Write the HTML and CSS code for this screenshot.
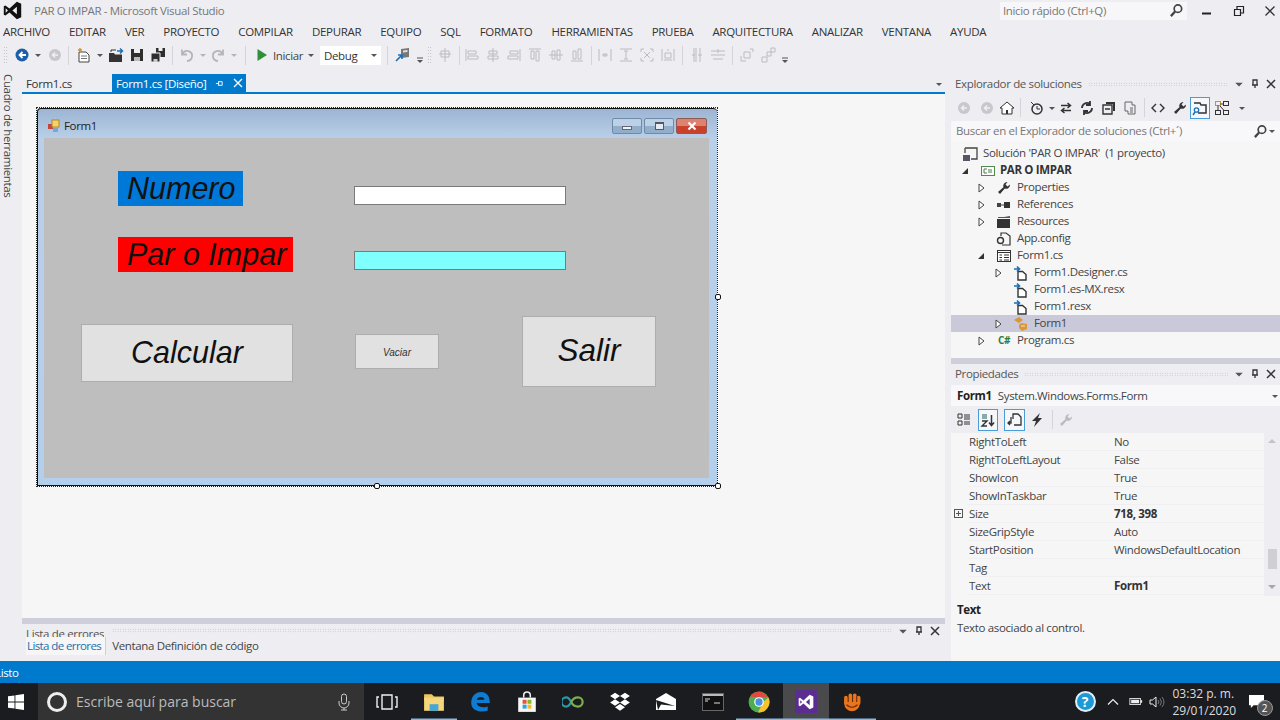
FILE: index.html
```html
<!DOCTYPE html>
<html lang="es">
<head>
    <meta charset="UTF-8">
    <title>PAR O IMPAR - Microsoft Visual Studio</title>
    <link rel="stylesheet" href="styles.css">
</head>
<body>
    <svg class="defs" width="0" height="0">
        <symbol id="vs" viewBox="0 0 24 24"><path fill-rule="evenodd" d="M17.5 1L23 3.6V20.4L17.5 23L8.2 14.4L3 18.4L1 17.4V6.6L3 5.6L8.2 9.6ZM17.5 7.2L11.9 12L17.5 16.8ZM3.4 9.2V14.8L6.2 12Z"/></symbol>
        <symbol id="doc" viewBox="0 0 16 16"><path d="M5 6.5H9.5L13 9.5V15H5Z" fill="#fff" stroke="#333" stroke-width="1.4"/><path d="M1 4H6M4 1.5L6.5 4L4 6.5" fill="none" stroke="#1a6fb0" stroke-width="1.6"/></symbol>
        <symbol id="arrow-open" viewBox="0 0 10 10"><path d="M8 2V8H2Z" fill="#333"/></symbol>
        <symbol id="arrow-closed" viewBox="0 0 10 10"><path d="M3 1L8 5L3 9Z" fill="#fff" stroke="#444"/></symbol>
        <symbol id="drop" viewBox="0 0 8 8"><path d="M1 3H7L4 6Z" fill="#555"/></symbol>
        <symbol id="drop-off" viewBox="0 0 8 8"><path d="M1 3H7L4 6Z" fill="#b5b5b8"/></symbol>
        <symbol id="more" viewBox="0 0 8 12"><path d="M1 6H7" stroke="#555"/><path d="M1 8H7L4 11Z" fill="#555"/></symbol>
        <symbol id="circle-off" viewBox="0 0 16 16"><circle cx="8" cy="8" r="6" fill="#c8c8cc"/><path d="M11 8H6M8 5.5L5.5 8L8 10.5" fill="none" stroke="#f0f0f3" stroke-width="1.5"/></symbol>
        <symbol id="wrench" viewBox="0 0 16 16"><path d="M14 4.5A4 4 0 0 1 8.8 8.6L4 14L2 12L7.4 7.2A4 4 0 0 1 11.5 2L9.5 4.5L11.5 6.5Z" fill="#333"/></symbol>
    </svg>

    <header class="titlebar">
        <svg class="vs-logo"><use href="#vs"/></svg>
        <span class="title-text">PAR O IMPAR - Microsoft Visual Studio</span>
        <div class="quick-launch">
            <span>Inicio rápido (Ctrl+Q)</span>
            <svg class="search-ic" viewBox="0 0 16 16"><circle cx="9.5" cy="6" r="4" fill="none" stroke="#444" stroke-width="1.8"/><path d="M6.5 9L2 14" stroke="#444" stroke-width="2.4"/></svg>
        </div>
        <div class="win-controls">
            <svg viewBox="0 0 12 12"><path d="M1 8.5H10" stroke="#222" stroke-width="2"/></svg>
            <svg viewBox="0 0 12 12"><path d="M1.5 4.5H7.5V10.5H1.5ZM4 4.5V1.5H10.5V8H7.5" fill="none" stroke="#222" stroke-width="1.2"/></svg>
            <svg viewBox="0 0 12 12"><path d="M1.5 1.5L10.5 10.5M10.5 1.5L1.5 10.5" stroke="#333" stroke-width="1.3"/></svg>
        </div>
    </header>

    <nav class="menubar">
        <span>ARCHIVO</span><span>EDITAR</span><span>VER</span><span>PROYECTO</span><span>COMPILAR</span><span>DEPURAR</span><span>EQUIPO</span><span>SQL</span><span>FORMATO</span><span>HERRAMIENTAS</span><span>PRUEBA</span><span>ARQUITECTURA</span><span>ANALIZAR</span><span>VENTANA</span><span>AYUDA</span>
    </nav>

    <div class="toolbar">
        <i class="grip"></i>
        <svg class="ic ml6" viewBox="0 0 16 16"><circle cx="8" cy="8" r="6.5" fill="#1c5fa8"/><path d="M12 8H6M8.5 5L5.5 8L8.5 11" fill="none" stroke="#fff" stroke-width="1.8"/></svg>
        <svg class="dd"><use href="#drop"/></svg>
        <svg class="ic ml2"><use href="#circle-off"/></svg>
        <i class="sep sep-first"></i>
        <svg class="ic" viewBox="0 0 16 16"><path d="M3 5H10L13 8V15H3Z" fill="#fff" stroke="#444"/><path d="M2 3H6M4 1V5" stroke="#c9942f" stroke-width="1.4"/><path d="M5 9H11M5 11.5H11" stroke="#777"/></svg>
        <svg class="dd"><use href="#drop"/></svg>
        <svg class="ic ml1" viewBox="0 0 16 16"><path d="M1 6H6L7 7.5H14V15H1Z" fill="#333"/><path d="M3 5V3H8" fill="none" stroke="#333"/><path d="M9 4H14M12 1.5L14.5 4L12 6.5" fill="none" stroke="#1c6fb5" stroke-width="1.5"/></svg>
        <svg class="ic ml5" viewBox="0 0 16 16"><path d="M2 2H14V14H2Z" fill="#2e2e2e"/><path d="M5 2H11V6H5Z" fill="#eee"/><path d="M5 10H11V14H5Z" fill="#bbb"/></svg>
        <svg class="ic ml5" viewBox="0 0 16 16"><path d="M6 1H15V10H6Z" fill="#2e2e2e"/><path d="M8.5 1H12.5V4H8.5Z" fill="#eee"/><path d="M1 6H10V15H1Z" fill="#2e2e2e" stroke="#eeeef2"/><path d="M3.5 12H7.5V15H3.5Z" fill="#ccc"/></svg>
        <i class="sep"></i>
        <svg class="ic" viewBox="0 0 16 16"><path d="M3 2.5V7.5H8M3.5 7A5 5 0 1 1 8 14" fill="none" stroke="#b5b5b8" stroke-width="1.8"/></svg>
        <svg class="dd"><use href="#drop-off"/></svg>
        <svg class="ic" viewBox="0 0 16 16"><path d="M13 2.5V7.5H8M12.5 7A5 5 0 1 0 8 14" fill="none" stroke="#b5b5b8" stroke-width="1.8"/></svg>
        <svg class="dd"><use href="#drop-off"/></svg>
        <i class="sep sep-play"></i>
        <svg class="play" viewBox="0 0 12 14"><path d="M1.5 1L11 7L1.5 13Z" fill="#2f8f3a"/></svg>
        <span class="start-label">Iniciar</span>
        <svg class="dd"><use href="#drop"/></svg>
        <div class="combo">Debug<svg class="combo-dd"><use href="#drop"/></svg></div>
        <i class="sep sep-wide"></i>
        <svg class="ic" viewBox="0 0 16 16"><path d="M6 2L14 1V10L6 11Z" fill="#777"/><path d="M8 3.5L12.5 3V5L8 5.5Z" fill="#ddd"/><path d="M1 14L7 8M3 8L7 8L7 12" fill="none" stroke="#1c6fb5" stroke-width="1.6"/></svg>
        <svg class="more-ic"><use href="#more"/></svg>
        <i class="grip"></i>
        <div class="off-tools">
            <svg class="ic ml5" viewBox="0 0 16 16"><path d="M8 1V15M2 7H14M4 4H12V10H4Z"/></svg>
            <i class="sep sep-off"></i>
            <svg class="ic ml4" viewBox="0 0 16 16"><path d="M2 2V14M4 4H12V7H4ZM4 9H14V12H4Z"/></svg>
            <svg class="ic ml5" viewBox="0 0 16 16"><path d="M8 1V15M4 4H12V7H4ZM3 9H13V12H3Z"/></svg>
            <svg class="ic ml5" viewBox="0 0 16 16"><path d="M14 2V14M4 4H12V7H4ZM2 9H12V12H2Z"/></svg>
            <svg class="ic ml5" viewBox="0 0 16 16"><path d="M2 2H14M4 4V12H7V4ZM9 4V14H12V4Z"/></svg>
            <svg class="ic ml5" viewBox="0 0 16 16"><path d="M1 8H15M4 4V12H7V4ZM9 3V13H12V3Z"/></svg>
            <svg class="ic ml5" viewBox="0 0 16 16"><path d="M2 14H14M4 4V12H7V4ZM9 2V12H12V2Z"/></svg>
            <i class="sep sep-off"></i>
            <svg class="ic ml5" viewBox="0 0 16 16"><path d="M2 2V14M14 2V14M5 8H11M7 6V10M9 6V10"/></svg>
            <svg class="ic ml5" viewBox="0 0 16 16"><path d="M2 2H14M2 14H14M8 4V12M6 4H10M6 12H10"/></svg>
            <svg class="ic ml5" viewBox="0 0 16 16"><path d="M2 5V2H5M11 2H14V5M14 11V14H11M5 14H2V11M5 5L11 11M11 5L5 11"/></svg>
            <svg class="ic ml5" viewBox="0 0 16 16"><path d="M2 2V14M14 2V14M4 13H12M5 6H11V11H5ZM7 3H9"/></svg>
            <i class="sep sep-off"></i>
            <svg class="ic ml6" viewBox="0 0 16 16"><path d="M5 1V15M7 1V15M11 1V15M3 8H6M9 8H13"/></svg>
            <svg class="ic ml5" viewBox="0 0 16 16"><path d="M1 8H15M1 4H15M3 12H13M8 2V6"/></svg>
            <i class="sep sep-off"></i>
            <svg class="ic ml6" viewBox="0 0 16 16"><path d="M5 5H11V11H5ZM2 9V14H7M11 2H14V5"/></svg>
            <svg class="ic ml5" viewBox="0 0 16 16"><path d="M2 10H7V15H2ZM7 5H11V9H7ZM11 1H15V5H11Z"/></svg>
        </div>
        <svg class="more-ic"><use href="#more"/></svg>
    </div>

    <div class="workspace">
        <aside class="toolbox-strip"><span>Cuadro de herramientas</span></aside>

        <main class="center">
            <div class="tabs">
                <div class="tab">Form1.cs</div>
                <div class="tab tab-active">
                    <span class="tab-name">Form1.cs [Diseño]</span>
                    <svg class="tab-pin" viewBox="0 0 10 10"><path d="M1 5H4M4 2.5V7.5M4 3H8V7H4" fill="none" stroke="#fff"/></svg>
                    <svg class="tab-close" viewBox="0 0 10 10"><path d="M1 1L9 9M9 1L1 9" stroke="#fff" stroke-width="1.3"/></svg>
                </div>
                <svg class="tabs-drop"><use href="#drop"/></svg>
            </div>

            <div class="designer">
                <div class="selection">
                    <div class="form-window">
                        <div class="form-title">
                            <svg class="form-ic" viewBox="0 0 14 14"><rect x="1" y="5" width="5" height="5" fill="#c0453a"/><rect x="5" y="1" width="7" height="7" fill="#f5d36a" stroke="#b0892a"/><rect x="6" y="9" width="5" height="4" fill="#7ea6cf"/></svg>
                            <span>Form1</span>
                            <div class="form-btns">
                                <div class="form-btn"><i class="glyph-min"></i></div>
                                <div class="form-btn"><i class="glyph-max"></i></div>
                                <div class="form-btn form-btn-close"><svg viewBox="0 0 10 10"><path d="M1.5 1.5L8.5 8.5M8.5 1.5L1.5 8.5" stroke="#fff" stroke-width="2.2"/></svg></div>
                            </div>
                        </div>
                        <div class="form-client">
                            <div class="ctl lbl lbl-numero">Numero</div>
                            <div class="ctl lbl lbl-par">Par o Impar</div>
                            <div class="ctl txt txt-num"></div>
                            <div class="ctl txt txt-res"></div>
                            <div class="ctl btn btn-calc">Calcular</div>
                            <div class="ctl btn btn-vaciar">Vaciar</div>
                            <div class="ctl btn btn-salir">Salir</div>
                        </div>
                    </div>
                    <i class="handle handle-r"></i>
                    <i class="handle handle-b"></i>
                    <i class="handle handle-rb"></i>
                </div>
            </div>

            <div class="splitter"></div>

            <div class="errors">
                <div class="errors-head">
                    <div class="errors-title"><span>Lista de errores</span></div>
                    <i class="grip-h"></i>
                    <svg class="head-ic"><use href="#drop"/></svg>
                    <svg class="head-pin" viewBox="0 0 10 10"><path d="M3 1H7V6H3ZM2 6H8M5 6V9" fill="none" stroke="#333" stroke-width="1.3"/></svg>
                    <svg class="head-x" viewBox="0 0 10 10"><path d="M1 1L9 9M9 1L1 9" stroke="#333" stroke-width="1.5"/></svg>
                </div>
                <div class="errors-tabs">
                    <span class="err-tab err-tab-on">Lista de errores</span>
                    <span class="err-tab">Ventana Definición de código</span>
                </div>
            </div>
        </main>

        <aside class="side">
            <section class="explorer">
                <div class="panel-head">
                    <span>Explorador de soluciones</span>
                    <i class="grip-h"></i>
                    <svg class="head-ic"><use href="#drop"/></svg>
                    <svg class="head-pin" viewBox="0 0 10 10"><path d="M3 1H7V6H3ZM2 6H8M5 6V9" fill="none" stroke="#333" stroke-width="1.3"/></svg>
                    <svg class="head-x" viewBox="0 0 10 10"><path d="M1 1L9 9M9 1L1 9" stroke="#333" stroke-width="1.5"/></svg>
                </div>
                <div class="side-tools">
                    <svg class="ic"><use href="#circle-off"/></svg>
                    <svg class="ic st-7"><use href="#circle-off"/></svg>
                    <svg class="ic st-4" viewBox="0 0 16 16"><path d="M8 2L15 8H13V14H3V8H1Z" fill="#fff" stroke="#333"/><path d="M7 10H9V14H7Z" fill="#333"/></svg>
                    <i class="sep st-sep"></i>
                    <svg class="ic st-8" viewBox="0 0 16 16"><circle cx="8" cy="9" r="5" fill="none" stroke="#333" stroke-width="1.5"/><path d="M8 6V9H11M2 2L5 5" fill="none" stroke="#333"/></svg>
                    <svg class="dd-s"><use href="#drop"/></svg>
                    <svg class="ic st-2" viewBox="0 0 16 16"><path d="M3 5.5H12M9.5 3L12.5 5.5L9.5 8M13 10.5H4M6.5 8L3.5 10.5L6.5 13" fill="none" stroke="#333" stroke-width="1.5"/></svg>
                    <svg class="ic st-5" viewBox="0 0 16 16"><path d="M3 8A5 5 0 0 1 11 4M13 8A5 5 0 0 1 5 12M11 1V5H7M5 15V11H9" fill="none" stroke="#333" stroke-width="1.8"/></svg>
                    <svg class="ic st-6" viewBox="0 0 16 16"><path d="M5 2H14V11H12V4H5Z" fill="#333"/><path d="M2 5H11V14H2ZM4 9H9" fill="none" stroke="#333" stroke-width="1.4"/></svg>
                    <svg class="ic st-6" viewBox="0 0 16 16"><path d="M2 2H9V5H12V14H5V11H2ZM7 8H10M7 10H10M7 12H10" fill="none" stroke="#666"/></svg>
                    <i class="sep st-sep"></i>
                    <svg class="ic st-5" viewBox="0 0 16 16"><path d="M6 4L2 8L6 12M10 4L14 8L10 12" fill="none" stroke="#333" stroke-width="1.4"/></svg>
                    <svg class="ic st-6"><use href="#wrench"/></svg>
                    <div class="tool-on"><svg class="ic" viewBox="0 0 16 16"><path d="M2 3H8L9 5H14V13H6" fill="none" stroke="#333" stroke-width="1.5"/><circle cx="4.5" cy="10" r="2.2" fill="none" stroke="#1c6fb5" stroke-width="1.3"/><path d="M3 12L1 15" stroke="#1c6fb5" stroke-width="1.5"/></svg></div>
                    <svg class="ic st-3" viewBox="0 0 16 16"><rect x="1.5" y="1.5" width="5" height="4" fill="none" stroke="#c9942f"/><rect x="9.5" y="1.5" width="5" height="4" fill="none" stroke="#333"/><rect x="1.5" y="10.5" width="5" height="4" fill="none" stroke="#333"/><rect x="9.5" y="10.5" width="5" height="4" fill="none" stroke="#333"/><path d="M4 5.5V10.5M6.5 4H9.5M6 6L10 10.5" stroke="#333"/></svg>
                    <svg class="dd-s st-8"><use href="#drop"/></svg>
                </div>
                <div class="side-search">
                    <span>Buscar en el Explorador de soluciones (Ctrl+´)</span>
                    <svg class="search-ic" viewBox="0 0 16 16"><circle cx="9.5" cy="6" r="4" fill="none" stroke="#444" stroke-width="1.8"/><path d="M6.5 9L2 14" stroke="#444" stroke-width="2.4"/></svg>
                    <svg class="dd-s"><use href="#drop"/></svg>
                </div>
                <div class="tree">
                    <div class="row sol">
                        <svg class="row-ic" viewBox="0 0 16 16"><path d="M3 2H15V13H9M3 2V7" fill="none" stroke="#444" stroke-width="1.3"/><path d="M1 9H8V15H1Z" fill="#556"/></svg>
                        <span>Solución 'PAR O IMPAR'&nbsp; (1 proyecto)</span>
                    </div>
                    <div class="row lv0 strong">
                        <svg class="arrow"><use href="#arrow-open"/></svg>
                        <svg class="row-ic" viewBox="0 0 16 16"><rect x="1.5" y="3.5" width="13" height="9" fill="#fff" stroke="#4f8a4f"/><path d="M4 6H7M4 6V10H7M9 6V10M11 6V10" fill="none" stroke="#4f7a4f"/></svg>
                        <span>PAR O IMPAR</span>
                    </div>
                    <div class="row lv1">
                        <svg class="arrow"><use href="#arrow-closed"/></svg>
                        <svg class="row-ic"><use href="#wrench"/></svg>
                        <span>Properties</span>
                    </div>
                    <div class="row lv1">
                        <svg class="arrow"><use href="#arrow-closed"/></svg>
                        <svg class="row-ic" viewBox="0 0 16 16"><rect x="1" y="6" width="4" height="4" fill="#444"/><rect x="8" y="5" width="6" height="6" fill="#333"/><path d="M5 8H8" stroke="#444"/></svg>
                        <span>References</span>
                    </div>
                    <div class="row lv1">
                        <svg class="arrow"><use href="#arrow-closed"/></svg>
                        <svg class="row-ic" viewBox="0 0 16 16"><path d="M1 5H14V14H1Z" fill="#333"/><path d="M2 3H8L14 2V4H2Z" fill="#555"/></svg>
                        <span>Resources</span>
                    </div>
                    <div class="row lv1">
                        <i class="arrow"></i>
                        <svg class="row-ic" viewBox="0 0 16 16"><path d="M5 5V2H10L14 5V14H6" fill="none" stroke="#333" stroke-width="1.2"/><circle cx="4.5" cy="9.5" r="3" fill="none" stroke="#333" stroke-width="1.4"/></svg>
                        <span>App.config</span>
                    </div>
                    <div class="row lv1">
                        <svg class="arrow"><use href="#arrow-open"/></svg>
                        <svg class="row-ic" viewBox="0 0 16 16"><rect x="1.5" y="2.5" width="13" height="11" fill="#fff" stroke="#333"/><path d="M1.5 4.5H14.5M3.5 7H6M8 7H13M3.5 9.5H6M8 9.5H13M3.5 12H6M8 12H13" stroke="#333"/></svg>
                        <span>Form1.cs</span>
                    </div>
                    <div class="row lv2">
                        <svg class="arrow"><use href="#arrow-closed"/></svg>
                        <svg class="row-ic"><use href="#doc"/></svg>
                        <span>Form1.Designer.cs</span>
                    </div>
                    <div class="row lv2">
                        <i class="arrow"></i>
                        <svg class="row-ic"><use href="#doc"/></svg>
                        <span>Form1.es-MX.resx</span>
                    </div>
                    <div class="row lv2">
                        <i class="arrow"></i>
                        <svg class="row-ic"><use href="#doc"/></svg>
                        <span>Form1.resx</span>
                    </div>
                    <div class="row lv2 row-sel">
                        <svg class="arrow"><use href="#arrow-closed"/></svg>
                        <svg class="row-ic" viewBox="0 0 16 16"><path d="M1 4L6 1L10 4L6 7ZM8 7L14 8V13L9 15L6 12V9Z" fill="#d8973a"/><path d="M8 10H12" stroke="#f3e3c0"/></svg>
                        <span>Form1</span>
                    </div>
                    <div class="row lv1">
                        <svg class="arrow"><use href="#arrow-closed"/></svg>
                        <span class="cs-ic">C#</span>
                        <span>Program.cs</span>
                    </div>
                </div>
            </section>

            <div class="splitter"></div>

            <section class="props">
                <div class="panel-head">
                    <span>Propiedades</span>
                    <i class="grip-h"></i>
                    <svg class="head-ic"><use href="#drop"/></svg>
                    <svg class="head-pin" viewBox="0 0 10 10"><path d="M3 1H7V6H3ZM2 6H8M5 6V9" fill="none" stroke="#333" stroke-width="1.3"/></svg>
                    <svg class="head-x" viewBox="0 0 10 10"><path d="M1 1L9 9M9 1L1 9" stroke="#333" stroke-width="1.5"/></svg>
                </div>
                <div class="object-combo">
                    <b>Form1</b><span>System.Windows.Forms.Form</span>
                    <svg class="dd-s"><use href="#drop"/></svg>
                </div>
                <div class="props-tools">
                    <svg class="ic" viewBox="0 0 16 16"><path d="M2 2H6V6H2ZM2 9H6V13H2ZM8 3H14M8 5H14M8 7H14M8 10H14M8 12H14" fill="none" stroke="#333"/></svg>
                    <div class="tool-on tool-alpha"><svg class="ic" viewBox="0 0 16 16"><path d="M2 2H7V7H2Z" fill="#8aa"/><path d="M2 9H7L2 14H7" fill="none" stroke="#333" stroke-width="1.4"/><path d="M11.5 3V13M9 10.5L11.5 13.5L14 10.5" fill="none" stroke="#333" stroke-width="1.5"/></svg></div>
                    <div class="tool-on tool-page"><svg class="ic" viewBox="0 0 16 16"><path d="M6 7V2H11L14 5V13H7" fill="none" stroke="#333" stroke-width="1.3"/><path d="M4 5V11H1M3 9L1 11L3 13" fill="none" stroke="#333" stroke-width="1.3"/></svg></div>
                    <svg class="ic tool-bolt" viewBox="0 0 16 16"><path d="M11 1L3 9H7L5 15L13 6H9Z" fill="#333"/></svg>
                    <i class="sep prop-sep"></i>
                    <svg class="ic tool-key" viewBox="0 0 16 16"><path d="M14 4.5A4 4 0 0 1 8.8 8.6L4 14L2 12L7.4 7.2A4 4 0 0 1 11.5 2L9.5 4.5L11.5 6.5Z" fill="#bbb"/></svg>
                </div>
                <div class="grid-wrap">
                    <div class="prop-grid">
                        <div class="p-row"><span class="p-name">RightToLeft</span><span class="p-val">No</span></div>
                        <div class="p-row"><span class="p-name">RightToLeftLayout</span><span class="p-val">False</span></div>
                        <div class="p-row"><span class="p-name">ShowIcon</span><span class="p-val">True</span></div>
                        <div class="p-row"><span class="p-name">ShowInTaskbar</span><span class="p-val">True</span></div>
                        <div class="p-row"><i class="plus"></i><span class="p-name">Size</span><span class="p-val strong">718, 398</span></div>
                        <div class="p-row"><span class="p-name">SizeGripStyle</span><span class="p-val">Auto</span></div>
                        <div class="p-row"><span class="p-name">StartPosition</span><span class="p-val">WindowsDefaultLocation</span></div>
                        <div class="p-row"><span class="p-name">Tag</span><span class="p-val"></span></div>
                        <div class="p-row"><span class="p-name">Text</span><span class="p-val strong">Form1</span></div>
                    </div>
                    <div class="scroll">
                        <svg viewBox="0 0 10 6"><path d="M1 5H9L5 1Z" fill="#c4c4c8"/></svg>
                        <i class="thumb"></i>
                        <svg viewBox="0 0 10 6"><path d="M1 1H9L5 5Z" fill="#a8a8ac"/></svg>
                    </div>
                </div>
                <div class="prop-desc">
                    <b>Text</b>
                    <span>Texto asociado al control.</span>
                </div>
            </section>
        </aside>
    </div>

    <footer class="statusbar"><span>Listo</span></footer>

    <div class="taskbar">
        <div class="start">
            <svg viewBox="0 0 16 16"><path d="M0 2.3L6.5 1.4V7.5H0ZM7.4 1.3L16 0V7.5H7.4ZM0 8.5H6.5V14.6L0 13.7ZM7.4 8.5H16V16L7.4 14.7Z" fill="#fff"/></svg>
        </div>
        <div class="cortana">
            <i class="ring"></i>
            <span>Escribe aquí para buscar</span>
            <svg class="mic" viewBox="0 0 12 18"><rect x="3.5" y="1" width="5" height="10" rx="2.5" fill="none" stroke="#ccc"/><path d="M1 8V10A5 5 0 0 0 11 10V8M6 15V17M3 17H9" fill="none" stroke="#ccc"/></svg>
        </div>
        <div class="task-apps">
            <div class="app"><svg viewBox="0 0 22 22"><path d="M6 4H16V18H6ZM3 6H1V16H3M19 6H21V16H19" fill="none" stroke="#eee" stroke-width="1.4"/></svg></div>
            <div class="app app-open"><svg viewBox="0 0 20 20"><path d="M1 3H8L10 5H19V9H1Z" fill="#f1c75c"/><path d="M1 6H19V18H1Z" fill="#f5d67a"/><path d="M6 12H14V18H6Z" fill="#49a5d6"/></svg></div>
            <div class="app"><svg viewBox="0 0 20 20"><path d="M2 11C2 5 6 1 11 1C16 1 19 5 19 11H7C7.5 14 11 16 17 14V18C10 20 2 18 2 11ZM7 8H14C14 4.5 8 4.5 7 8Z" fill="#0f7bd1"/></svg></div>
            <div class="app"><svg viewBox="0 0 20 20"><path d="M2 6H18V19H2Z" fill="#f7f7f7"/><path d="M7 6V4A3 3 0 0 1 13 4V6" fill="none" stroke="#eee" stroke-width="1.4"/><rect x="6" y="8" width="3.6" height="3.6" fill="#e8552d"/><rect x="10.4" y="8" width="3.6" height="3.6" fill="#7fba2a"/><rect x="6" y="12.4" width="3.6" height="3.6" fill="#2aa3e8"/><rect x="10.4" y="12.4" width="3.6" height="3.6" fill="#fbb820"/></svg></div>
            <div class="app"><svg viewBox="0 0 24 14"><path d="M10 7C8 3 6 2 4.5 2A5 5 0 0 0 4.5 12C6 12 8 11 10 7" fill="none" stroke="#2b9ba8" stroke-width="2.4"/><path d="M10 7C12 3 14 2 17.5 2A5 5 0 0 1 17.5 12C14 12 12 11 10 7" fill="none" stroke="#7db04a" stroke-width="2.4"/></svg></div>
            <div class="app"><svg viewBox="0 0 20 20"><path d="M5.5 1.5L10 4.5L5.5 7.5L1 4.5ZM14.5 1.5L19 4.5L14.5 7.5L10 4.5ZM5.5 7.5L10 10.5L5.5 13.5L1 10.5ZM14.5 7.5L19 10.5L14.5 13.5L10 10.5ZM5.5 14.8L10 11.8L14.5 14.8L10 18Z" fill="#fff"/></svg></div>
            <div class="app"><svg viewBox="0 0 22 20"><path d="M1 7L11 1L21 7V18H1Z" fill="#fff"/><path d="M1 8L20 14L6 12.5L3 18Z" fill="#1a1c20"/></svg></div>
            <div class="app"><svg viewBox="0 0 22 20"><rect x="0.5" y="1.5" width="21" height="17" fill="#111" stroke="#666"/><rect x="1" y="2" width="20" height="2" fill="#bbb"/><path d="M3 7H8M3 9H6M12 11H18" stroke="#ddd"/></svg></div>
            <div class="app app-open"><svg viewBox="0 0 20 20"><circle cx="10" cy="10" r="9.5" fill="#4cae4f"/><path d="M1.8 5.2A9.5 9.500 0 0 1 18.2 5.5H8Z" fill="#dd4b3e"/><path d="M18.6 6A9.5 9.5 0 0 1 9 19.5L14 10Z" fill="#fbc02d"/><circle cx="10" cy="10" r="4.4" fill="#fff"/><circle cx="10" cy="10" r="3.3" fill="#4a8fe0"/></svg></div>
            <div class="app app-open app-active"><div class="vs-tile"><svg><use href="#vs"/></svg></div></div>
            <div class="app app-open"><svg viewBox="0 0 20 20"><circle cx="10" cy="11.5" r="7" fill="#e8761e"/><path d="M4.5 6V11M8.500 4V10M12.500 4V10M16 6V11" stroke="#e8761e" stroke-width="3.4" stroke-linecap="round"/><path d="M6.500 5V10M10.500 4V10M14.300 5V10" stroke="#6b2a08"/><path d="M5 12.500C8 15.500 12 15.500 15 12.500" fill="none" stroke="#7c2e08" stroke-width="1.3"/></svg></div>
        </div>
        <div class="tray">
            <div class="help-ic">?</div>
            <svg class="tray-ic tray-up" viewBox="0 0 14 10"><path d="M2 8L7 3L12 8" fill="none" stroke="#eee" stroke-width="1.2"/></svg>
            <svg class="tray-ic" viewBox="0 0 16 10"><rect x="1" y="1.5" width="12" height="7" fill="none" stroke="#eee"/><rect x="2.5" y="3" width="9" height="4" fill="#eee"/><rect x="13.5" y="3.5" width="1.5" height="3" fill="#eee"/></svg>
            <svg class="tray-vol" viewBox="0 0 16 14"><path d="M1 5H3.5L7 2V12L3.5 9H1Z" fill="none" stroke="#eee"/><path d="M9 5A3 3 0 0 1 9 9M11 3.5A5.5 5.5 0 0 1 11 10.5M13 2A8 8 0 0 1 13 12" fill="none" stroke="#777"/></svg>
            <div class="clock"><span>03:32 p. m.</span><span>29/01/2020</span></div>
            <div class="notif">
                <svg viewBox="0 0 18 16"><path d="M1 1H17V12H6L3 15V12H1Z" fill="#fff"/></svg>
                <span class="notif-badge">2</span>
            </div>
        </div>
    </div>
</body>
</html>
```

FILE: styles.css
```css
* {
    box-sizing: border-box;
}
html, body {
    margin: 0;
    height: 720px;
    overflow: hidden;
}
body {
    width: 1280px;
    display: flex;
    flex-direction: column;
    background: #eeeef2;
    color: #444;
    font-family: "Open Sans", sans-serif;
    font-size: 11.5px;
    letter-spacing: -0.35px;
    white-space: nowrap;
}
i {
    display: block;
}
svg {
    display: block;
    flex: none;
}
.defs {
    position: absolute;
}

/* title + menu */
.titlebar {
    height: 21px;
    flex: none;
    display: flex;
    align-items: center;
}
.vs-logo {
    width: 19px;
    height: 19px;
    margin-left: 3px;
    fill: #111;
}
.title-text {
    margin-left: 12px;
    color: #777;
}
.quick-launch {
    margin-left: auto;
    width: 187px;
    height: 18px;
    background: #f7f7f9;
    display: flex;
    align-items: center;
    justify-content: space-between;
    padding: 0 3px;
    color: #777;
}
.search-ic {
    width: 15px;
    height: 15px;
}
.win-controls {
    width: 93px;
    display: flex;
    justify-content: space-between;
    padding: 0 4px 0 14px;
}
.win-controls svg {
    width: 12px;
    height: 12px;
}
.menubar {
    height: 22px;
    flex: none;
    display: flex;
    align-items: center;
    gap: 19px;
    padding: 0 0 2px 3px;
    color: #333;
    letter-spacing: -0.3px;
}
.toolbar {
    height: 24px;
    flex: none;
    display: flex;
    align-items: center;
    padding-left: 3px;
}
.grip {
    width: 5px;
    height: 18px;
    background-image: radial-gradient(#b8b8c0 0.7px, transparent 0.8px);
    background-size: 2.5px 3px;
}
.ic {
    width: 16px;
    height: 16px;
}
.ml1 { margin-left: 1px; }
.ml2 { margin-left: 2px; }
.ml4 { margin-left: 4px; }
.ml5 { margin-left: 5px; }
.ml6 { margin-left: 6px; }
.dd {
    width: 8px;
    height: 8px;
    margin: 0 3px 0 4px;
}
.dd-s {
    width: 8px;
    height: 8px;
}
.sep {
    width: 1px;
    height: 19px;
    background: #d4d4d9;
    margin: 0 6px;
}
.sep-first {
    margin: 0 7px 0 5px;
}
.sep-play {
    margin: 0 10px 0 4px;
}
.play {
    width: 12px;
    height: 14px;
}
.start-label {
    width: 30px;
    margin-left: 5px;
}
.combo {
    width: 61px;
    height: 19px;
    margin-left: 2px;
    background: #fff;
    display: flex;
    align-items: center;
    justify-content: space-between;
    padding: 0 3px 0 4px;
    color: #333;
}
.combo-dd {
    width: 8px;
    height: 8px;
}
.sep-wide {
    margin: 0 7px 0 6px;
}
.more-ic {
    width: 8px;
    height: 12px;
    margin: 5px 3px 0 5px;
}
.off-tools {
    display: flex;
    align-items: center;
}
.off-tools path {
    fill: none;
    stroke: #bcbcc0;
    stroke-width: 1;
}
.sep-off {
    margin: 0 0 0 6px;
}

/* main area */
.workspace {
    flex: 1;
    min-height: 0;
    display: flex;
    padding-top: 7px;
}
.toolbox-strip {
    width: 22px;
    flex: none;
    padding-left: 2px;
}
.toolbox-strip span {
    writing-mode: vertical-rl;
    display: block;
    color: #444;
    line-height: 13px;
}
.center {
    width: 923px;
    flex: none;
    display: flex;
    flex-direction: column;
}
.tabs {
    height: 20px;
    flex: none;
    display: flex;
    align-items: stretch;
    border-bottom: 2px solid #007acc;
}
.tab {
    width: 90px;
    padding-left: 4px;
    line-height: 19px;
    color: #333;
}
.tab-active {
    width: 134px;
    background: #007acc;
    color: #fff;
    display: flex;
    align-items: center;
}
.tab-name {
    width: 90px;
}
.tab-pin {
    width: 9px;
    height: 9px;
    margin-left: 9px;
}
.tab-close {
    width: 10px;
    height: 10px;
    margin-left: 9px;
}
.tabs-drop {
    width: 8px;
    height: 8px;
    margin: 6px 2px 0 auto;
}
.designer {
    flex: 1;
    min-height: 0;
    background: #f6f6f7;
    padding: 13px 0 0 14px;
}
.selection {
    position: relative;
    width: 682px;
    height: 380px;
    border: 1px dotted #222;
}
.form-window {
    height: 100%;
    border: 1px solid #111;
    border-width: 1px 0 1px 1px;
    border-radius: 4px 4px 0 0;
    background: linear-gradient(#9db5d3, #bad0e9 30px, #b4cfec);
    display: flex;
    flex-direction: column;
    padding: 0 8px 7px 6px;
}
.form-title {
    height: 29px;
    padding: 4px 0 0 3px;
    flex: none;
    display: flex;
    align-items: center;
    color: #222;
}
.form-ic {
    width: 14px;
    height: 14px;
    margin-right: 3px;
}
.form-btns {
    margin-left: auto;
    display: flex;
    gap: 2px;
    margin-right: 2px;
}
.form-btn {
    width: 30px;
    height: 16px;
    border: 1px solid #6f8bab;
    border-radius: 2px;
    background: linear-gradient(#bcd0e6 50%, #93aecb 50%);
    display: flex;
    align-items: center;
    justify-content: center;
}
.form-btn-close {
    width: 31px;
    border-color: #8f5a55;
    background: linear-gradient(#dd8270 50%, #c9402b 50%);
}
.form-btn-close svg {
    width: 10px;
    height: 10px;
}
.glyph-min {
    width: 10px;
    height: 4px;
    margin-top: 4px;
    background: #eef3f8;
    border: 1px solid #667;
}
.glyph-max {
    width: 9px;
    height: 8px;
    background: #e4ebf3;
    border: 1px solid #556;
    box-shadow: inset 0 1px 0 #556;
}
.form-client {
    position: relative;
    flex: 1;
    background: #bebebe;
}
/* controls sit where the designer put them, offsets are from the form client area */
.ctl {
    position: absolute;
    font-family: "Liberation Sans", sans-serif;
    font-style: italic;
    letter-spacing: 0;
    color: #111;
}
.lbl {
    left: 74px;
    height: 35px;
    line-height: 35px;
    padding-left: 9px;
    font-size: 30.5px;
}
.lbl-numero {
    top: 33px;
    width: 125px;
    background: #0078d7;
}
.lbl-par {
    top: 99px;
    width: 175px;
    background: #ff0000;
}
.txt {
    left: 310px;
    width: 212px;
    height: 19px;
    border: 1px solid #7a7a7a;
    background: #fff;
}
.txt-num {
    top: 48px;
}
.txt-res {
    top: 113px;
    background: #80ffff;
}
.btn {
    display: flex;
    align-items: center;
    justify-content: center;
    background: #e1e1e1;
    border: 1px solid #adadad;
}
.btn-calc {
    left: 37px;
    top: 186px;
    width: 212px;
    height: 58px;
    padding-bottom: 2px;
    font-size: 30.5px;
}
.btn-vaciar {
    left: 311px;
    top: 196px;
    width: 84px;
    height: 35px;
    padding-top: 2px;
    font-size: 10px;
    color: #333;
}
.btn-salir {
    left: 478px;
    top: 178px;
    width: 134px;
    height: 71px;
    padding-bottom: 2px;
    font-size: 31.5px;
}
.handle {
    position: absolute;
    width: 6px;
    height: 6px;
    background: #fff;
    border: 1px solid #111;
    border-radius: 2px;
}
.handle-r {
    right: -4px;
    top: 186px;
}
.handle-b {
    left: 337px;
    bottom: -3px;
}
.handle-rb {
    right: -4px;
    bottom: -3px;
}
.splitter {
    height: 6px;
    flex: none;
    background: #cfcfdc;
}
.errors {
    height: 37px;
    flex: none;
}
.errors-head {
    height: 13px;
    display: flex;
    align-items: center;
    padding: 0 5px 0 4px;
}
.errors-title {
    height: 11px;
    margin-top: 2px;
    overflow: hidden;
    line-height: 16px;
    color: #555;
    flex: none;
}
.grip-h {
    flex: 1;
    height: 5px;
    margin: 0 6px 0 8px;
    background-image: radial-gradient(#bcbcc4 0.7px, transparent 0.8px);
    background-size: 2.5px 2.5px;
}
.head-ic {
    width: 10px;
    height: 10px;
}
.head-pin {
    width: 10px;
    height: 10px;
    margin-left: 6px;
}
.head-x {
    width: 10px;
    height: 10px;
    margin-left: 6px;
}
.errors-tabs {
    display: flex;
    height: 20px;
    align-items: center;
    padding: 0 0 2px 4px;
}
.err-tab {
    padding: 0 4px 0 1px;
    color: #444;
    line-height: 18px;
}
.err-tab-on {
    color: #1e6fa8;
    border-right: 1px solid #cfcfd6;
    margin-right: 5px;
    background: #f6f6f7;
    letter-spacing: -0.6px;
}

/* right side panels */
.side {
    flex: 1;
    margin-left: 6px;
    display: flex;
    flex-direction: column;
    min-width: 0;
}
.explorer {
    height: 284px;
    flex: none;
    display: flex;
    flex-direction: column;
}
.panel-head {
    height: 20px;
    flex: none;
    display: flex;
    align-items: center;
    padding: 0 4px;
    color: #555;
}
.panel-head > span {
    padding-bottom: 2px;
}
.panel-head .grip-h {
    margin: 0 6px;
}
.side-tools {
    height: 27px;
    flex: none;
    display: flex;
    align-items: center;
    padding-left: 5px;
}
.st-2 { margin-left: 2px; }
.st-3 { margin-left: 4px; }
.st-4 { margin-left: 4px; }
.st-5 { margin-left: 5px; }
.st-6 { margin-left: 6px; }
.st-7 { margin-left: 7px; }
.st-8 { margin-left: 8px; }
.side-tools .dd-s {
    margin-left: 3px;
}
.side-tools .dd-s.st-8 {
    margin-left: 8px;
}
.st-sep {
    margin: 0 0 0 5px;
}
.tool-on {
    width: 20px;
    height: 22px;
    margin-left: 2px;
    border: 1px solid #4b9cd6;
    background: #f5f7fa;
    display: flex;
    align-items: center;
    justify-content: center;
}
.side-search {
    height: 20px;
    flex: none;
    background: #f8f8fa;
    display: flex;
    align-items: center;
    padding: 0 4px 0 5px;
    color: #777;
}
.side-search span {
    flex: 1;
    padding-bottom: 2px;
}
.tree {
    flex: 1;
    padding-top: 4px;
    background: #f6f6f7;
}
.row {
    height: 17px;
    display: flex;
    align-items: center;
    color: #444;
}
.row > span {
    padding-bottom: 2px;
}
.sol {
    padding-left: 11px;
}
.row-ic {
    width: 16px;
    height: 16px;
}
.lv0 { padding-left: 9px; }
.lv1 { padding-left: 25px; }
.lv2 { padding-left: 42px; }
.arrow {
    width: 10px;
    height: 10px;
    margin-right: 10px;
}
.row .row-ic + span, .cs-ic + span {
    margin-left: 5px;
}
.lv0 .row-ic + span {
    margin-left: 4px;
}
.strong {
    font-weight: 700;
    color: #333;
}
.row-sel {
    background: #c9c9d9;
}
.row > .cs-ic {
    width: 16px;
    color: #2f7d3f;
    font-weight: 700;
    font-size: 10px;
    text-align: center;
}
.props {
    flex: 1;
    min-height: 0;
    display: flex;
    flex-direction: column;
}
.object-combo {
    height: 21px;
    margin-top: 1px;
    flex: none;
    background: #f8f8fa;
    display: flex;
    align-items: center;
    padding: 0 1px 0 6px;
}
.object-combo b {
    color: #222;
    margin-right: 6px;
}
.object-combo .dd-s {
    margin-left: auto;
}
.props-tools {
    height: 27px;
    flex: none;
    display: flex;
    align-items: center;
    padding-left: 5px;
}
.tool-alpha {
    margin-left: 6px;
}
.tool-page {
    width: 21px;
    margin-left: 6px;
}
.tool-bolt {
    margin-left: 4px;
}
.prop-sep {
    margin: 0 0 0 7px;
}
.tool-key {
    margin-left: 5px;
}
.grid-wrap {
    height: 163px;
    flex: none;
    display: flex;
}
.prop-grid {
    flex: 1;
    background: #f6f6f7;
    padding-left: 16px;
}
.p-row {
    position: relative;
    height: 18px;
    display: flex;
    align-items: center;
    border-bottom: 1px solid #f0f0f2;
    color: #444;
}
.p-name {
    width: 145px;
    padding-left: 2px;
}
.p-val {
    padding-left: 2px;
}
.plus {
    position: absolute;
    left: -13px;
    top: 4px;
    width: 9px;
    height: 9px;
    border: 1px solid #555;
    background: linear-gradient(#555, #555) center / 5px 1px no-repeat, linear-gradient(#555, #555) center / 1px 5px no-repeat;
}
.scroll {
    width: 16px;
    flex: none;
    display: flex;
    flex-direction: column;
    align-items: center;
    padding: 5px 0 6px;
    background: #eeeef2;
}
.scroll svg {
    width: 10px;
    height: 6px;
}
.thumb {
    width: 9px;
    height: 20px;
    margin: 105px 0 auto;
    background: #d0d0d4;
}
.prop-desc {
    flex: 1;
    background: #f6f6f7;
    padding: 6px 6px;
    display: flex;
    flex-direction: column;
    gap: 3px;
    line-height: 15px;
}
.prop-desc b {
    color: #222;
}

/* bottom bars */
.statusbar {
    height: 22px;
    flex: none;
    background: #007acc;
    color: #fff;
    line-height: 23px;
    overflow: hidden;
}
.statusbar span {
    display: block;
    margin-left: -5px;
}
.taskbar {
    height: 37px;
    flex: none;
    background: #1a1c20;
    display: flex;
    align-items: stretch;
    color: #eee;
}
.start {
    width: 38px;
    display: flex;
    align-items: center;
    padding-left: 8px;
}
.start svg {
    width: 16px;
    height: 16px;
}
.cortana {
    width: 326px;
    background: #333;
    display: flex;
    align-items: center;
    padding-left: 9px;
    color: #bbb;
    font-size: 14px;
    letter-spacing: 0;
}
.ring {
    width: 20px;
    height: 20px;
    border: 3px solid #eee;
    border-radius: 50%;
    margin-right: 9px;
}
.mic {
    width: 12px;
    height: 18px;
    margin-left: auto;
    margin-right: 14px;
}
.task-apps {
    display: flex;
    align-items: center;
    flex: none;
}
.task-apps .app {
    width: 46.5px;
    height: 37px;
    display: flex;
    align-items: center;
    justify-content: center;
}
.task-apps .app svg {
    width: 22px;
    height: 22px;
}
.app-open {
    box-shadow: inset 0 -2px 0 -0.5px #8ab8e0;
}
.app-active {
    background: #4a4a4d;
}
.vs-tile {
    width: 22px;
    height: 23px;
    background: #5c2d91;
    display: flex;
    align-items: center;
    justify-content: center;
}
.task-apps .vs-tile svg {
    width: 16px;
    height: 16px;
    fill: #fff;
}
.tray {
    flex: 1;
    display: flex;
    align-items: center;
}
.help-ic {
    width: 21px;
    height: 21px;
    margin-left: 199px;
    border-radius: 50%;
    background: #1b9ad6;
    border: 2px solid #dff0fa;
    color: #fff;
    font-weight: 700;
    font-size: 14px;
    text-align: center;
    line-height: 17px;
}
.tray-ic {
    width: 14px;
    height: 11px;
    margin-left: 9px;
}
.tray-up {
    margin-left: 10px;
}
.tray-vol {
    width: 16px;
    height: 14px;
    margin-left: 6px;
}
.clock {
    width: 60px;
    margin-left: 8px;
    display: flex;
    flex-direction: column;
    text-align: center;
    line-height: 17px;
    color: #ddd;
    font-size: 12px;
    letter-spacing: 0;
}
.notif {
    position: relative;
    margin-left: 15px;
}
.notif svg {
    width: 17px;
    height: 15px;
}
.notif-badge {
    position: absolute;
    right: -8px;
    bottom: -7px;
    width: 16px;
    height: 16px;
    border-radius: 50%;
    background: #555;
    border: 1px solid #999;
    color: #fff;
    font-size: 10px;
    line-height: 14px;
    text-align: center;
}
```
